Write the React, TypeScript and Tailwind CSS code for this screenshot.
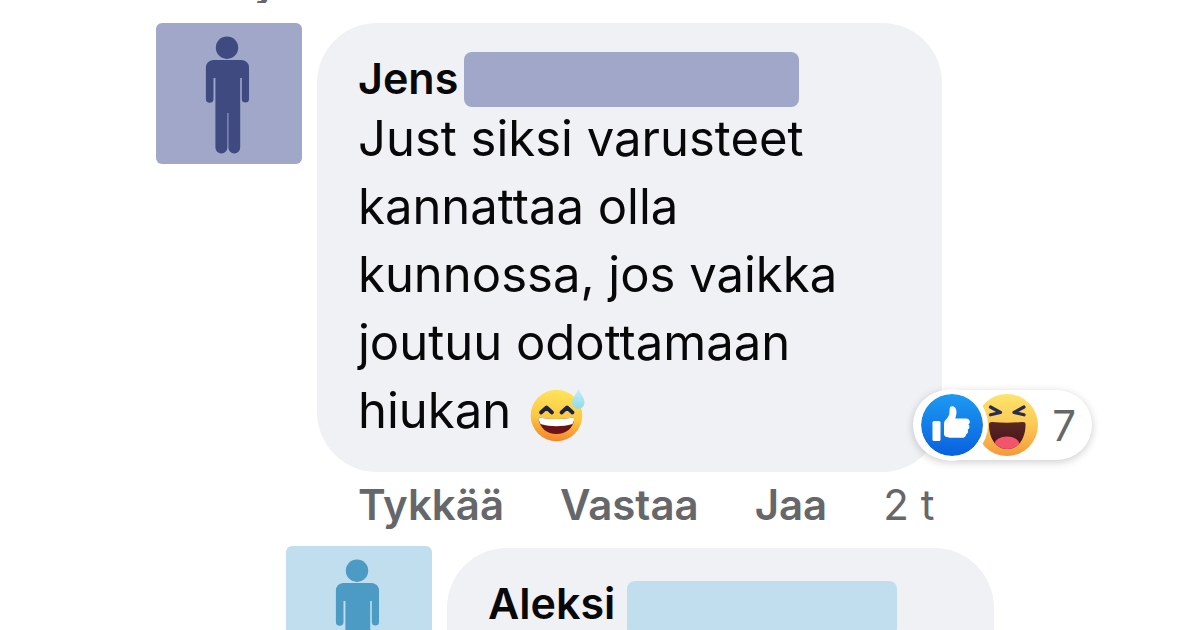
import type { ReactNode } from "react";

function PersonAvatar({ className }: { className: string }) {
  return (
    <svg viewBox="0 0 146 141" className={`w-[146px] h-[141px] shrink-0 rounded-md ${className}`} fill="currentColor" role="img" aria-label="Profile picture">
      <circle cx="71" cy="24.7" r="11.2" />
      <path d="M57 37H86a7.500 7.500 0 0 1 7 7.500V76a3.600 3.600 0 0 1-7.200 0V55h-1.600V124.500a5.700 5.700 0 0 1-11.800 0V90h-1V124.500a5.900 5.900 0 0 1-12 0V55H57.500V76a3.800 3.800 0 0 1-7.600 0V44.500A7.500 7.500 0 0 1 57 37Z" />
    </svg>
  );
}

function SweatSmile() {
  return (
    <svg viewBox="0 0 56 56" className="ml-1 inline-block size-14 align-[-14px]" role="img" aria-label="Grinning face with sweat">
      <defs>
        <linearGradient id="sweatFace" x1="0.5" y1="0" x2="0.4" y2="1">
          <stop offset="0" stopColor="#fee45c" />
          <stop offset="0.55" stopColor="#fbc83f" />
          <stop offset="1" stopColor="#f5812c" />
        </linearGradient>
        <linearGradient id="drop" x1="0" y1="0" x2="0" y2="1">
          <stop offset="0" stopColor="#c5eef5" />
          <stop offset="1" stopColor="#8fd9ec" />
        </linearGradient>
      </defs>
      <circle cx="27.500" cy="29.500" r="25.800" fill="url(#sweatFace)" />
      <path d="M12 26.500 17.500 21.500 23 26.500M32.500 26.500 38 21.500 43.500 26.500" fill="none" stroke="#1c2445" strokeWidth="3.800" strokeLinecap="round" strokeLinejoin="round" />
      <path d="M9.500 33.500c-.6-1.500.5-2 1.800-1.700 10.500 1.700 21.500 1.700 32 0 1.500-.2 2.300.5 1.900 1.900C43.500 42.500 37 48 27.500 48S11.500 42.500 9.500 33.500Z" fill="#6b1417" />
      <path d="M9.500 33.500c-.6-1.500.5-2 1.800-1.700 10.500 1.700 21.500 1.700 32 0 1.500-.2 2.300.5 1.900 1.900l-1.700 4.300c-10 3-22 3-32 0Z" fill="#fff" />
      <path d="M49.500 3c2.500 5 6 9.300 6 13.500a6.200 6.200 0 0 1-12.500 0C43 12.300 47.500 8 49.500 3Z" fill="url(#drop)" />
    </svg>
  );
}

function LikeIcon() {
  return (
    <svg viewBox="0 0 62 62" className="relative size-[62px] rounded-full ring-5 ring-white" role="img" aria-label="Like">
      <defs>
        <linearGradient id="likeBlue" x1="0" y1="0" x2="0" y2="1">
          <stop offset="0" stopColor="#1c9bf2" />
          <stop offset="1" stopColor="#0a60df" />
        </linearGradient>
      </defs>
      <circle cx="31" cy="31" r="31" fill="url(#likeBlue)" />
      <rect x="11.500" y="27" width="8" height="20" rx="1.500" fill="#fff" />
      <path d="M23 29.500c0-2 1.200-3 2.500-4.500 2-2.200 3-4.500 3-7.500 0-3.500.4-5.300 2.500-5.300 3 0 4.500 2.600 4.500 5.800 0 2.600-.7 4.600-1.200 6.500H45c2.300 0 3.800 1.500 3.800 3.300 0 1.200-.6 2.200-1.500 2.800.9.600 1.200 1.500 1.100 2.500-.1 1.300-.9 2.200-1.800 2.700.5.700.6 1.500.4 2.300-.3 1.200-1 1.900-2 2.300.1 2.500-1.800 3.300-4.500 3.300H29c-3.800 0-6-1.700-6-3.700Z" fill="#fff" />
    </svg>
  );
}

function HahaIcon() {
  return (
    <svg viewBox="0 0 62 62" className="-ml-[7px] size-[62px]" role="img" aria-label="Haha">
      <defs>
        <linearGradient id="hahaFace" x1="0.5" y1="0" x2="0.5" y2="1">
          <stop offset="0" stopColor="#fee46c" />
          <stop offset="0.5" stopColor="#fbc955" />
          <stop offset="1" stopColor="#f3993c" />
        </linearGradient>
        <linearGradient id="hahaMouth" x1="0" y1="0" x2="0" y2="1">
          <stop offset="0" stopColor="#5c2a22" />
          <stop offset="1" stopColor="#421018" />
        </linearGradient>
        <clipPath id="mouthClip">
          <path d="M13 30.500c0-1.800 1.200-2.500 3-2.400 10.500.7 20.500.7 30.500 0 2-.1 3.100.7 3.100 2.500C49.500 44 43 55 31.300 55S13 44 13 30.500Z" />
        </clipPath>
      </defs>
      <circle cx="31" cy="31" r="31" fill="url(#hahaFace)" />
      <path d="M14.500 13 24.500 18.500 14.500 20.800M48 13 38 18.500 48 20.800" fill="none" stroke="#2a2c4c" strokeWidth="3.200" strokeLinecap="round" strokeLinejoin="round" />
      <g clipPath="url(#mouthClip)">
        <rect x="10" y="25" width="42" height="32" fill="url(#hahaMouth)" />
        <ellipse cx="31" cy="50.500" rx="12.500" ry="8" fill="#f2546c" />
      </g>
    </svg>
  );
}

function Bubble({ name, redaction, className, children }: { name: string; redaction: string; className: string; children?: ReactNode }) {
  return (
    <div className={`relative min-w-0 flex-1 rounded-[60px] bg-[#eff1f5] px-[41px] pt-[29px] pb-[27px] ${className}`}>
      <div className="flex h-[53px] items-start">
        <h2 className="text-[43px] leading-[52px] font-semibold">{name}</h2>
        <span className={`h-[55px] rounded-lg ${redaction}`} />
      </div>
      {children}
    </div>
  );
}

export default function App() {
  return (
    <main className="h-screen overflow-hidden bg-white pl-[13%] font-['Inter','Liberation_Sans',sans-serif] text-[#080809]">
      <div className="flex h-[23px] items-start pl-[98px] text-[40px] font-semibold text-[#65676b]">
        <div className="flex h-[3px] items-end overflow-hidden leading-10">y</div>
      </div>
      <article>
        <div className="flex gap-[15px]">
          <PersonAvatar className="bg-[#a0a7c8] text-[#3f4b80]" />
          <Bubble name="Jens" redaction="ml-[6px] w-[335px] bg-[#a0a7c8]" className="max-w-[625px]">
            <p className="text-[49px] leading-[68px]">
              Just siksi varusteet kannattaa olla kunnossa, jos vaikka joutuu odottamaan hiukan <SweatSmile />
            </p>
            <button type="button" className="absolute -right-[150px] bottom-3 flex h-[70px] items-center rounded-full bg-white pr-4 pl-2 text-[42px] text-[#65676b] shadow-[0_2px_8px_rgba(0,0,0,0.2)]">
              <LikeIcon />
              <HahaIcon />
              <span className="ml-[14px]">7</span>
            </button>
          </Bubble>
        </div>
        <div className="flex h-16 items-center gap-14 pl-[202px] text-[42px] font-semibold text-[#65676b]">
          <button type="button">Tykkää</button>
          <button type="button">Vastaa</button>
          <button type="button">Jaa</button>
          <time className="font-normal">2 t</time>
        </div>
      </article>
      <article className="flex gap-[15px] pt-[10px] pl-[130px]">
        <PersonAvatar className="bg-[#c0deee] text-[#4b9bc5]" />
        <Bubble name="Aleksi" redaction="mt-1 ml-3 w-[270px] bg-[#c0deee]" className="mt-[2px] max-w-[547px]" />
      </article>
    </main>
  );
}
